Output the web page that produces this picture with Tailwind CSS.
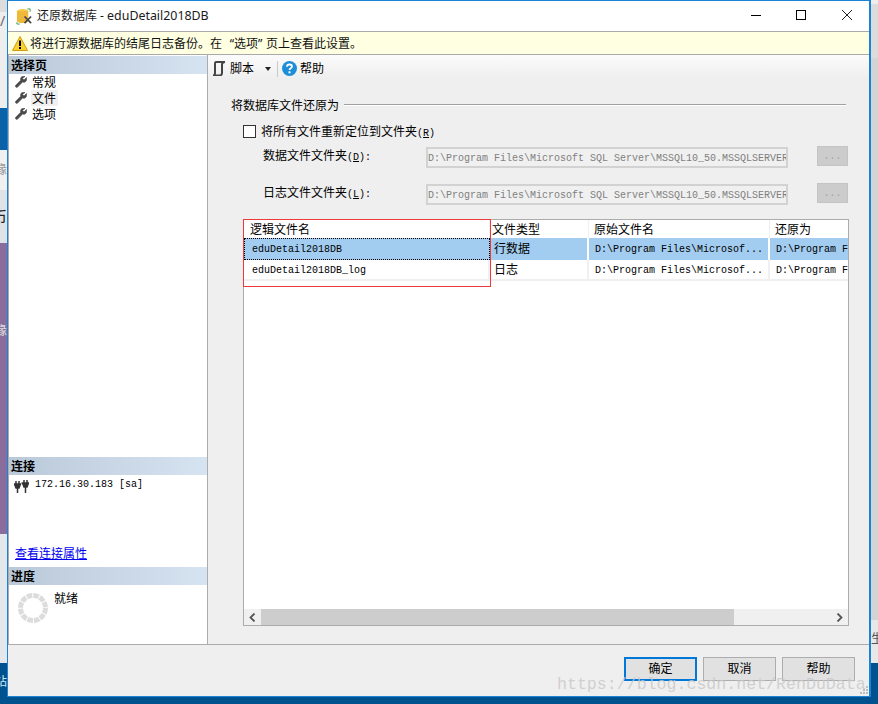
<!DOCTYPE html>
<html lang="zh-CN">
<head>
    <meta charset="UTF-8">
    <title>还原数据库 - eduDetail2018DB</title>
    <script src="https://cdn.jsdelivr.net/npm/@tailwindcss/browser@4"></script>
</head>
<body class="w-[878px] h-[704px] overflow-hidden bg-[#d8d8d8] text-black text-[12px] leading-[16px] font-['Noto_Sans','Noto_Sans_CJK_SC',sans-serif]">
    <div class="relative flex w-[878px] h-[704px]">
        <!-- 背景の窓 (左) -->
        <div class="w-[7px] flex flex-col shrink-0 overflow-hidden">
            <div class="h-[108px] bg-[#eeeeee] border-t-[12px] border-[#dddddd] text-[#667] text-[14px] leading-[16px] pt-[1px] whitespace-nowrap">/</div>
            <div class="h-[42px] bg-[#0b62a6]"></div>
            <div class="h-[40px] bg-[#f0f0f0] flex items-center justify-end text-[#999] whitespace-nowrap">缘</div>
            <div class="h-[53px] bg-[#dfe2e7] flex items-center justify-end text-[#222] text-[16px] whitespace-nowrap">币</div>
            <div class="h-[291px] bg-[#8a6d9c] flex items-start justify-end pt-[80px] text-[#ddd] whitespace-nowrap">缘</div>
            <div class="h-[129px] bg-[#e4e7ec]"></div>
            <div class="flex-1 bg-[#00528f] flex items-center justify-end pb-[3px] text-[#cfe0ee] whitespace-nowrap">站</div>
        </div>

        <!-- ダイアログ -->
        <div class="w-[864px] h-[697px] shrink-0 border border-[#1a83d8] border-r-2 bg-[#efefef] flex flex-col">
            <!-- タイトルバー -->
            <div class="h-[30px] bg-white flex items-center shrink-0">
                <svg class="ml-[8px] w-[17px] h-[17px]" viewBox="0 0 18 18">
                    <ellipse cx="7" cy="3.500" rx="6" ry="2.500" fill="#f5c84a"/>
                    <path d="M1 3.500v10c0 1.400 2.700 2.500 6 2.500s6-1.100 6-2.500v-10z" fill="#eeb93a"/>
                    <path d="M12 1h3v3M1 15v2h3" stroke="#3a9a4a" fill="none"/>
                    <path d="M9 16l7-7M9 9l7 7" stroke="#444" stroke-width="1.800"/>
                </svg>
                <span class="ml-[4px] text-[#1a1a1a] whitespace-nowrap">还原数据库 - <span class="text-[12.400px]">eduDetail2018DB</span></span>
                <div class="ml-auto mt-[-2px] mr-[17px] flex items-center gap-[35px]">
                    <svg class="w-[10px] h-[10px]" viewBox="0 0 10 10"><path d="M0 5.500h10" stroke="#000"/></svg>
                    <svg class="w-[10px] h-[10px]" viewBox="0 0 10 10"><rect x=".5" y=".5" width="9" height="9" fill="none" stroke="#000"/></svg>
                    <svg class="ml-[1px] w-[10px] h-[10px]" viewBox="0 0 10 10"><path d="M0 0l10 10M10 0L0 10" stroke="#222"/></svg>
                </div>
            </div>
            <!-- 警告バー -->
            <div class="h-[24px] bg-[#ffffe1] border-y border-[#a9a9a9] flex items-center shrink-0">
                <svg class="ml-[4px] w-[16px] h-[15px]" viewBox="0 0 16 15">
                    <path d="M8 .5L15.500 14.500H.5z" fill="#fbd12d" stroke="#d29a12" stroke-linejoin="round"/>
                    <path d="M8 4.500v5.500M8 11v2" stroke="#000" stroke-width="2"/>
                </svg>
                <span class="ml-[2px] mt-[1px] text-[#111] whitespace-nowrap">将进行源数据库的结尾日志备份。在<span class="inline-block w-[12px] text-right">“</span>选项<span class="inline-block w-[8px]">”</span>页上查看此设置。</span>
            </div>

            <div class="flex h-[589px] shrink-0">
                <!-- サイドバー -->
                <div class="w-[200px] bg-white border-l border-r border-l-[#acacac] border-r-[#acacac] flex flex-col shrink-0">
                    <div class="mt-[1px] h-[18px] px-[2px] font-bold leading-[20px] bg-gradient-to-r from-[#bac9d9] to-[#d6e3f1]">选择页</div>
                    <div>
                        <div class="h-[16px] flex items-center pl-[6px]">
                            <svg class="w-[12px] h-[12px]" viewBox="0 0 12 12"><path d="M11.500 1.500L9 4 7.500 2.500 10 .5C8 -.5 5.500 .8 5.500 3c0 .5 0 .8.2 1.200L.8 9.200c-.6.6-.6 1.300 0 1.800s1.200.6 1.800 0l5-4.900c2.300.9 4.900-1.400 3.900-4.600z" fill="#4b4b4b" stroke="#4b4b4b" stroke-width=".6"/></svg>
                            <span class="ml-[5px] h-[16px] leading-[18px]">常规</span>
                        </div>
                        <div class="h-[16px] flex items-center pl-[6px]">
                            <svg class="w-[12px] h-[12px]" viewBox="0 0 12 12"><path d="M11.500 1.500L9 4 7.500 2.500 10 .5C8 -.5 5.500 .8 5.500 3c0 .5 0 .8.2 1.200L.8 9.200c-.6.6-.6 1.300 0 1.800s1.200.6 1.800 0l5-4.900c2.300.9 4.900-1.400 3.900-4.600z" fill="#4b4b4b" stroke="#4b4b4b" stroke-width=".6"/></svg>
                            <span class="ml-[4px] px-[1px] h-[16px] w-[27px] leading-[18px] bg-[#f0f0f0]">文件</span>
                        </div>
                        <div class="h-[16px] flex items-center pl-[6px]">
                            <svg class="w-[12px] h-[12px]" viewBox="0 0 12 12"><path d="M11.500 1.500L9 4 7.500 2.500 10 .5C8 -.5 5.500 .8 5.500 3c0 .5 0 .8.2 1.200L.8 9.200c-.6.6-.6 1.300 0 1.800s1.200.6 1.800 0l5-4.900c2.300.9 4.900-1.400 3.900-4.600z" fill="#4b4b4b" stroke="#4b4b4b" stroke-width=".6"/></svg>
                            <span class="ml-[5px] h-[16px] leading-[18px]">选项</span>
                        </div>
                    </div>
                    <div class="mt-[335px] h-[18px] px-[2px] font-bold leading-[20px] bg-gradient-to-r from-[#bac9d9] to-[#d6e3f1]">连接</div>
                    <div class="h-[20px] flex items-center pl-[5px]">
                        <svg class="mt-[3px] w-[15px] h-[13px]" viewBox="0 0 15 13"><path d="M2 1v3M5 1v3M10 0v3M13 0v3M.5 4h6L5 8H2zM8.500 3h6L13 7h-3zM3.500 8v5M11.500 7v6" stroke="#333" fill="#333" stroke-width="1.500"/></svg>
                        <span class="ml-[6px] font-['Liberation_Mono',monospace] text-[10px]">172.16.30.183 [sa]</span>
                    </div>
                    <a class="mt-[51px] ml-[6px] h-[16px] text-[#0000ee] underline w-fit">查看连接属性</a>
                    <div class="mt-[5px] h-[18px] px-[2px] font-bold leading-[20px] bg-gradient-to-r from-[#bac9d9] to-[#d6e3f1]">进度</div>
                    <div class="flex pl-[9px] pt-[8px]">
                        <svg class="w-[30px] h-[30px]" viewBox="0 0 30 30"><circle cx="15" cy="15" r="12.500" fill="none" stroke="#dcdcdc" stroke-width="5" stroke-dasharray="5.500 1.040"/></svg>
                        <span class="ml-[6px] mt-[-2px]">就绪</span>
                    </div>
                </div>

                <!-- 右ペイン -->
                <div class="flex-1 flex flex-col min-w-0">
                    <div class="h-[25px] shrink-0 bg-gradient-to-b from-[#fbfbfb] to-[#eeeeee] flex items-center pl-[4px] pt-[2px]">
                        <svg class="w-[14px] h-[15px]" viewBox="0 0 14 15"><path d="M4 1h9M13 1c-2 0-3 1-3 2.500V12c0 1.500-1 2.500-2.500 2.500H1C3 14.500 3 13 3 12V3c0-1 .5-2 1-2z" fill="none" stroke="#444" stroke-width="2"/></svg>
                        <span class="ml-[4px]">脚本</span>
                        <svg class="ml-[11px] w-[6px] h-[4px]" viewBox="0 0 6 4"><path d="M0 0h6L3 4z" fill="#222"/></svg>
                        <div class="ml-[6px] w-px h-[16px] bg-[#c9c9c9]"></div>
                        <svg class="ml-[4px] w-[15px] h-[15px]" viewBox="0 0 15 15"><circle cx="7.500" cy="7.500" r="7.500" fill="#1e8ed8"/><path d="M5 5.800c0-1.500 1.100-2.300 2.500-2.300s2.500.8 2.500 2.100c0 1.700-2.500 1.800-2.500 3.400" fill="none" stroke="#fff" stroke-width="1.800"/><rect x="6.500" y="10.300" width="2" height="2" fill="#fff"/></svg>
                        <span class="ml-[3px]">帮助</span>
                    </div>

                    <div class="pl-[23px] pr-[23px] flex flex-col">
                        <div class="mt-[18px] h-[16px] flex items-center">
                            <span>将数据库文件还原为</span>
                            <div class="ml-[5px] mb-[2px] flex-1 h-[2px] border-t border-[#a0a0a0] bg-white"></div>
                        </div>
                        <label class="mt-[9px] ml-[12px] h-[16px] flex items-center">
                            <span class="w-[13px] h-[13px] border border-[#333] bg-white"></span>
                            <span class="ml-[5px] h-[16px] leading-[18px]">将所有文件重新定位到文件夹<span class="font-['Liberation_Mono',monospace] text-[10px]">(<u>R</u>)</span></span>
                        </label>
                        <div class="mt-[8px] ml-[32px] h-[21px] flex items-start">
                            <span class="w-[163px] shrink-0 leading-[18px]">数据文件文件夹<span class="font-['Liberation_Mono',monospace] text-[10px]">(<u>D</u>):</span></span>
                            <div class="w-[362px] h-[21px] shrink-0 border-2 border-[#d2d2d2] bg-[#f0f0f0] text-[#7f7f7f] font-['Liberation_Mono',monospace] text-[10px] leading-[19px] overflow-hidden whitespace-nowrap">D:\Program Files\Microsoft SQL Server\MSSQL10_50.MSSQLSERVER</div>
                            <div class="ml-[29px] mt-[-1px] w-[31px] h-[20px] shrink-0 border border-[#c4c4c4] bg-[#cccccc] text-[#a3a3a3] text-center font-['Liberation_Mono',monospace] text-[10px] leading-[20px]">...</div>
                        </div>
                        <div class="mt-[16px] ml-[32px] h-[21px] flex items-start">
                            <span class="w-[163px] shrink-0 leading-[18px]">日志文件文件夹<span class="font-['Liberation_Mono',monospace] text-[10px]">(<u>L</u>):</span></span>
                            <div class="w-[362px] h-[21px] shrink-0 border-2 border-[#d2d2d2] bg-[#f0f0f0] text-[#7f7f7f] font-['Liberation_Mono',monospace] text-[10px] leading-[19px] overflow-hidden whitespace-nowrap">D:\Program Files\Microsoft SQL Server\MSSQL10_50.MSSQLSERVER</div>
                            <div class="ml-[29px] mt-[-1px] w-[31px] h-[20px] shrink-0 border border-[#c4c4c4] bg-[#cccccc] text-[#a3a3a3] text-center font-['Liberation_Mono',monospace] text-[10px] leading-[20px]">...</div>
                        </div>

                        <!-- ファイル一覧 -->
                        <div class="relative mt-[14px] ml-[12px] w-[606px] h-[407px] border border-[#acacac] bg-white flex flex-col">
                            <div class="h-[18px] grid grid-cols-[246px_99px_181px_78px] leading-[19px] overflow-hidden">
                                <div class="pl-[6px] border-r border-[#f0f0f0]">逻辑文件名</div>
                                <div class="pl-[2px] border-r border-[#f0f0f0]">文件类型</div>
                                <div class="pl-[5px] border-r border-[#f0f0f0]">原始文件名</div>
                                <div class="pl-[5px]">还原为</div>
                            </div>
                            <div class="h-[22px] grid grid-cols-[246px_99px_181px_78px] bg-[#a3cdf0] font-['Liberation_Mono',monospace] text-[10px] leading-[23px] whitespace-nowrap overflow-hidden">
                                <div class="pl-[7px] border border-dotted border-black h-[22px] leading-[21px]">eduDetail2018DB</div>
                                <div class="pl-[4px] border-r-2 border-white font-['Noto_Sans_CJK_SC',sans-serif] text-[12px] leading-[19px]">行数据</div>
                                <div class="pl-[6px] border-r-2 border-white">D:\Program Files\Microsof...</div>
                                <div class="pl-[6px] overflow-hidden">D:\Program Files</div>
                            </div>
                            <div class="h-[21px] grid grid-cols-[246px_99px_181px_78px] border-b-2 border-[#f0f0f0] font-['Liberation_Mono',monospace] text-[10px] leading-[21px] whitespace-nowrap overflow-hidden">
                                <div class="pl-[8px] border-r-2 border-[#f0f0f0]">eduDetail2018DB_log</div>
                                <div class="pl-[4px] border-r-2 border-[#f0f0f0] font-['Noto_Sans_CJK_SC',sans-serif] text-[12px] leading-[17px]">日志</div>
                                <div class="pl-[6px] border-r-2 border-[#f0f0f0]">D:\Program Files\Microsof...</div>
                                <div class="pl-[6px] overflow-hidden">D:\Program Files</div>
                            </div>
                            <!-- スクロールバー -->
                            <div class="mt-auto h-[16px] bg-[#f0f0f0] flex items-center">
                                <svg class="ml-[5px] w-[7px] h-[9px]" viewBox="0 0 7 9"><path d="M5.500 .5l-4 4 4 4" fill="none" stroke="#555" stroke-width="1.800"/></svg>
                                <div class="ml-[5px] w-[473px] h-[16px] bg-[#cdcdcd]"></div>
                                <svg class="ml-auto mr-[5px] w-[7px] h-[9px]" viewBox="0 0 7 9"><path d="M1.500 .5l4 4-4 4" fill="none" stroke="#555" stroke-width="1.800"/></svg>
                            </div>
                            <!-- 赤枠 -->
                            <div class="absolute left-[-1px] top-[-1px] w-[248px] h-[68px] border border-[#f03a3a]"></div>
                        </div>
                    </div>
                </div>
            </div>

            <!-- ボタン -->
            <div class="flex-1 border-t border-[#acacac] flex items-start justify-end pt-[12px] pr-[14px] gap-[6px]">
                <button class="w-[73px] h-[24px] border-[2px] border-[#0078d7] bg-[#e1e1e1] text-[12px] leading-[18px]">确定</button>
                <button class="w-[73px] h-[24px] border border-[#adadad] bg-[#e1e1e1] text-[12px] leading-[18px]">取消</button>
                <button class="w-[73px] h-[24px] border border-[#adadad] bg-[#e1e1e1] text-[12px] leading-[18px]">帮助</button>
            </div>
        </div>

        <!-- 背景の窓 (右) -->
        <div class="flex-1 flex flex-col overflow-hidden">
            <div class="h-[58px] bg-[#dcdcdc] border-t-[4px] border-[#eeeeee]"></div>
            <div class="h-[562px] bg-[#d4d4d4]"></div>
            <div class="h-[43px] bg-[#e8e8e8] flex items-center pb-[6px] text-[#555] whitespace-nowrap">生</div>
            <div class="flex-1 bg-[#00528f]"></div>
        </div>

        <!-- 下端の背景 -->
        <div class="absolute left-0 right-0 bottom-0 h-[7px] bg-[#00528f]"></div>
        <!-- サイズ変更グリップ -->
        <svg class="absolute left-[860px] top-[686px] w-[9px] h-[9px]" viewBox="0 0 9 9"><path d="M6 0h2v2H6zM3 3h2v2H3zM6 3h2v2H6zM0 6h2v2H0zM3 6h2v2H3zM6 6h2v2H6z" fill="#bdbdbd"/></svg>
        <!-- 透かし -->
        <div class="absolute left-[557px] top-[673px] text-[#c8c8c8]/80 font-['Liberation_Mono',monospace] text-[16.600px] leading-[24px] whitespace-nowrap">https://blog.csdn.net/RenDuData</div>
    </div>
</body>
</html>
